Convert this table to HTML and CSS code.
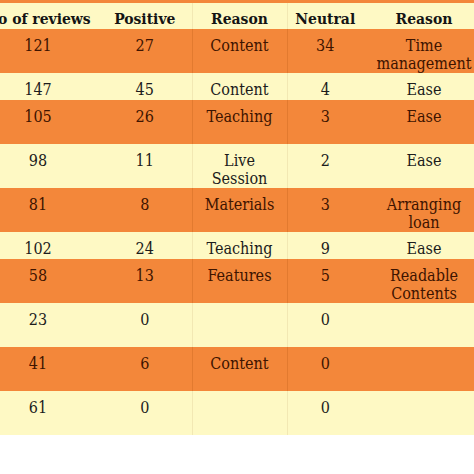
FILE: index.html
```html
<!DOCTYPE html>
<html>
<head>
<meta charset="utf-8">
<link rel="stylesheet" href="styles.css">
</head>
<body>
<div class="frame">
<table class="reviews">
  <colgroup>
    <col class="c1"><col class="c2"><col class="c3"><col class="c4"><col class="c5">
  </colgroup>
  <thead>
    <tr class="short cream head">
      <th>No of reviews</th><th>Positive</th><th class="div">Reason</th><th class="div">Neutral</th><th>Reason</th>
    </tr>
  </thead>
  <tbody>
    <tr class="tall orange"><td>121</td><td>27</td><td class="div">Content</td><td class="div">34</td><td>Time<br>management</td></tr>
    <tr class="short cream"><td>147</td><td>45</td><td class="div">Content</td><td class="div">4</td><td>Ease</td></tr>
    <tr class="tall orange"><td>105</td><td>26</td><td class="div">Teaching</td><td class="div">3</td><td>Ease</td></tr>
    <tr class="tall cream"><td>98</td><td>11</td><td class="div">Live<br>Session</td><td class="div">2</td><td>Ease</td></tr>
    <tr class="tall orange"><td>81</td><td>8</td><td class="div">Materials</td><td class="div">3</td><td>Arranging<br>loan</td></tr>
    <tr class="short cream"><td>102</td><td>24</td><td class="div">Teaching</td><td class="div">9</td><td>Ease</td></tr>
    <tr class="tall orange"><td>58</td><td>13</td><td class="div">Features</td><td class="div">5</td><td>Readable<br>Contents</td></tr>
    <tr class="tall cream"><td>23</td><td>0</td><td class="div"></td><td class="div">0</td><td></td></tr>
    <tr class="tall orange"><td>41</td><td>6</td><td class="div">Content</td><td class="div">0</td><td></td></tr>
    <tr class="tall cream"><td>61</td><td>0</td><td class="div"></td><td class="div">0</td><td></td></tr>
  </tbody>
</table>
</div>
</body>
</html>
```

FILE: styles.css
```css
html, body {
  margin: 0;
  padding: 0;
  background: #ffffff;
  overflow: hidden;
}

.frame {
  width: 474px;
  height: 474px;
  overflow: hidden;
}

.reviews {
  border-collapse: collapse;
  table-layout: fixed;
  width: 507px;
  margin-left: -22px;
  border-top: 3px solid #f3873a;
  font-family: "DejaVu Serif Condensed", "DejaVu Serif", serif;
  font-stretch: semi-condensed;
  font-size: 16px;
  line-height: 18px;
}

.c1 { width: 120px; }
.c2 { width: 94px; }
.c3 { width: 95px; }
.c4 { width: 76px; }
.c5 { width: 122px; }

.reviews th,
.reviews td {
  padding: 8px 0 0 0;
  text-align: center;
  vertical-align: top;
  white-space: nowrap;
}

.reviews th {
  padding-top: 7px;
  font-size: 15.5px;
  font-weight: bold;
  color: #141414;
}

.short { height: 27px; }
.tall { height: 44px; }

.orange {
  background: #f3873a;
  color: #3e1400;
}

.cream {
  background: #fef9c4;
  color: #1c1c1c;
}

.orange .div { border-left: 1px solid rgba(196, 96, 30, 0.35); }
.cream .div { border-left: 1px solid rgba(220, 200, 150, 0.35); }
```
